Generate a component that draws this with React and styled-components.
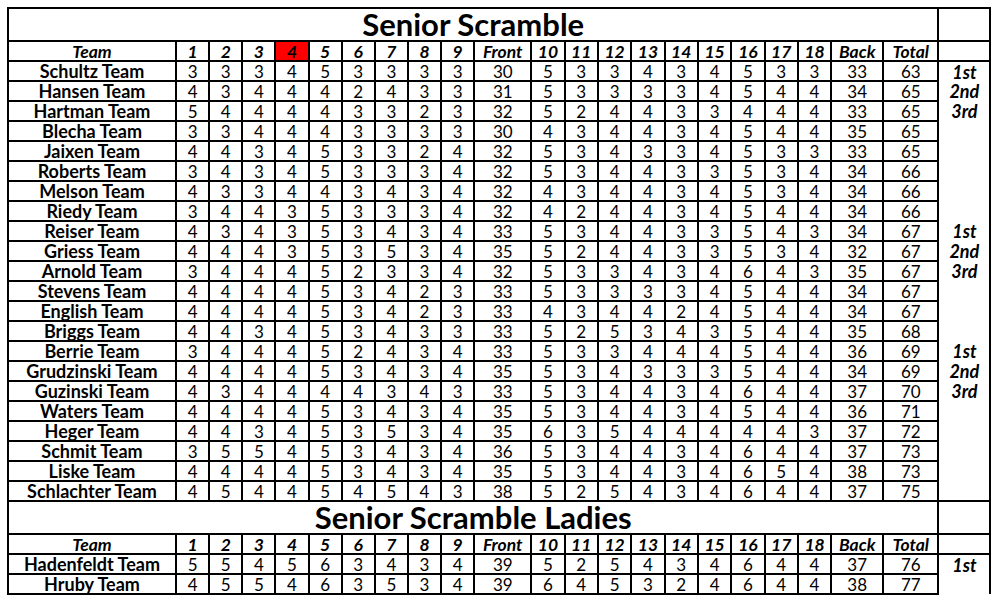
import React from 'react';
import styled, { createGlobalStyle } from 'styled-components';

const GlobalStyle = createGlobalStyle`
  html, body { margin: 0; padding: 0; background: #fff; }
  body { font-family: Lato, "Liberation Sans", sans-serif; color: #000; }
`;

const Page = styled.div`
  padding: 7px 0 0 7px;
`;

const Sheet = styled.table`
  border-collapse: collapse;
  table-layout: fixed;
  width: 983px;
`;

const Col = styled.col`
  width: ${(p) => p.$w}px;
`;

const BaseCell = styled.td`
  border: 2px solid #000;
  padding: 1px 0 0;
  height: 17px;
  text-align: center;
  vertical-align: middle;
  white-space: nowrap;
  overflow: hidden;
  line-height: 17px;
`;

const TitleCell = styled(BaseCell)`
  height: 31px;
  padding: 0;
  font-size: 31px;
  font-weight: 700;
  line-height: 31px;
  overflow: visible;
`;

const HeadCell = styled(BaseCell)`
  font-size: 17.5px;
  font-weight: 700;
  font-style: italic;
  background: ${(p) => (p.$hot ? '#ff0000' : '#fff')};
`;

const TeamCell = styled(BaseCell)`
  font-size: 18px;
  font-weight: 700;
`;

const ScoreCell = styled(BaseCell)`
  font-size: 17px;
  font-weight: 400;
`;

const RankCell = styled(BaseCell)`
  font-size: 18px;
  font-weight: 700;
  font-style: italic;
  border-top: none;
  border-bottom: none;
`;

const seniors = [
  ['Schultz Team', '3 3 3 4 5 3 3 3 3', 30, '5 3 3 4 3 4 5 3 3', 33, 63, '1st'],
  ['Hansen Team', '4 3 4 4 4 2 4 3 3', 31, '5 3 3 3 3 4 5 4 4', 34, 65, '2nd'],
  ['Hartman Team', '5 4 4 4 4 3 3 2 3', 32, '5 2 4 4 3 3 4 4 4', 33, 65, '3rd'],
  ['Blecha Team', '3 3 4 4 4 3 3 3 3', 30, '4 3 4 4 3 4 5 4 4', 35, 65, ''],
  ['Jaixen Team', '4 4 3 4 5 3 3 2 4', 32, '5 3 4 3 3 4 5 3 3', 33, 65, ''],
  ['Roberts Team', '3 4 3 4 5 3 3 3 4', 32, '5 3 4 4 3 3 5 3 4', 34, 66, ''],
  ['Melson Team', '4 3 3 4 4 3 4 3 4', 32, '4 3 4 4 3 4 5 3 4', 34, 66, ''],
  ['Riedy Team', '3 4 4 3 5 3 3 3 4', 32, '4 2 4 4 3 4 5 4 4', 34, 66, ''],
  ['Reiser Team', '4 3 4 3 5 3 4 3 4', 33, '5 3 4 4 3 3 5 4 3', 34, 67, '1st'],
  ['Griess Team', '4 4 4 3 5 3 5 3 4', 35, '5 2 4 4 3 3 5 3 4', 32, 67, '2nd'],
  ['Arnold Team', '3 4 4 4 5 2 3 3 4', 32, '5 3 3 4 3 4 6 4 3', 35, 67, '3rd'],
  ['Stevens Team', '4 4 4 4 5 3 4 2 3', 33, '5 3 3 3 3 4 5 4 4', 34, 67, ''],
  ['English Team', '4 4 4 4 5 3 4 2 3', 33, '4 3 4 4 2 4 5 4 4', 34, 67, ''],
  ['Briggs Team', '4 4 3 4 5 3 4 3 3', 33, '5 2 5 3 4 3 5 4 4', 35, 68, ''],
  ['Berrie Team', '3 4 4 4 5 2 4 3 4', 33, '5 3 3 4 4 4 5 4 4', 36, 69, '1st'],
  ['Grudzinski Team', '4 4 4 4 5 3 4 3 4', 35, '5 3 4 3 3 3 5 4 4', 34, 69, '2nd'],
  ['Guzinski Team', '4 3 4 4 4 4 3 4 3', 33, '5 3 4 4 3 4 6 4 4', 37, 70, '3rd'],
  ['Waters Team', '4 4 4 4 5 3 4 3 4', 35, '5 3 4 4 3 4 5 4 4', 36, 71, ''],
  ['Heger Team', '4 4 3 4 5 3 5 3 4', 35, '6 3 5 4 4 4 4 4 3', 37, 72, ''],
  ['Schmit Team', '3 5 5 4 5 3 4 3 4', 36, '5 3 4 4 3 4 6 4 4', 37, 73, ''],
  ['Liske Team', '4 4 4 4 5 3 4 3 4', 35, '5 3 4 4 3 4 6 5 4', 38, 73, ''],
  ['Schlachter Team', '4 5 4 4 5 4 5 4 3', 38, '5 2 5 4 3 4 6 4 4', 37, 75, ''],
];

const ladies = [
  ['Hadenfeldt Team', '5 5 4 5 6 3 4 3 4', 39, '5 2 5 4 3 4 6 4 4', 37, 76, '1st'],
  ['Hruby Team', '4 5 5 4 6 3 5 3 4', 39, '6 4 5 3 2 4 6 4 4', 38, 77, ''],
];

const widths = [
  168,
  ...Array(9).fill(33.15),
  57,
  ...Array(9).fill(33.33),
  52,
  55,
  52,
];

const headers = ['1', '2', '3', '4', '5', '6', '7', '8', '9', 'Front', '10', '11', '12', '13', '14', '15', '16', '17', '18', 'Back', 'Total'];

function TitleRow({ children }) {
  return (
    <tr>
      <TitleCell colSpan={22}>{children}</TitleCell>
      <TitleCell />
    </tr>
  );
}

function HeaderRow({ hotHole }) {
  return (
    <tr>
      <HeadCell>Team</HeadCell>
      {headers.map((h) => (
        <HeadCell key={h} $hot={h === hotHole}>{h}</HeadCell>
      ))}
      <HeadCell />
    </tr>
  );
}

function TeamRow({ row }) {
  const [name, front, fTot, back, bTot, total, rank] = row;
  return (
    <tr>
      <TeamCell>{name}</TeamCell>
      {front.split(' ').map((s, i) => (
        <ScoreCell key={'f' + i}>{s}</ScoreCell>
      ))}
      <ScoreCell>{fTot}</ScoreCell>
      {back.split(' ').map((s, i) => (
        <ScoreCell key={'b' + i}>{s}</ScoreCell>
      ))}
      <ScoreCell>{bTot}</ScoreCell>
      <ScoreCell>{total}</ScoreCell>
      <RankCell>{rank}</RankCell>
    </tr>
  );
}

export default function App() {
  return (
    <>
      <GlobalStyle />
      <Page>
        <Sheet>
          <colgroup>
            {widths.map((w, i) => (
              <Col key={i} $w={w} />
            ))}
          </colgroup>
          <tbody>
            <TitleRow>Senior Scramble</TitleRow>
            <HeaderRow hotHole="4" />
            {seniors.map((r) => (
              <TeamRow key={r[0]} row={r} />
            ))}
            <TitleRow>Senior Scramble Ladies</TitleRow>
            <HeaderRow />
            {ladies.map((r) => (
              <TeamRow key={r[0]} row={r} />
            ))}
          </tbody>
        </Sheet>
      </Page>
    </>
  );
}
